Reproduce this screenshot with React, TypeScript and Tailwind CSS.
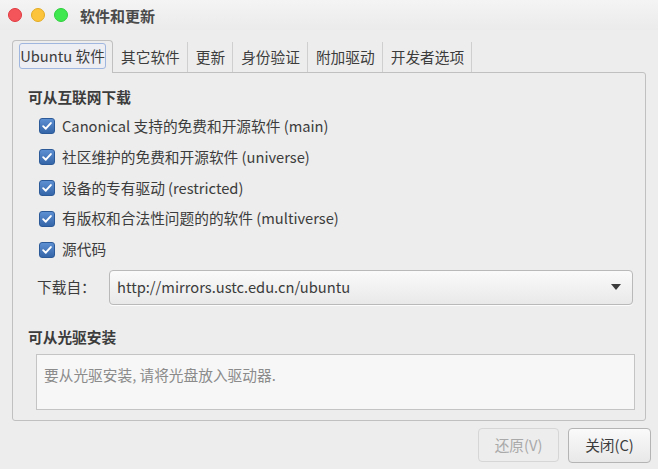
import React from "react";

const SOURCES = [
  "Canonical 支持的免费和开源软件 (main)",
  "社区维护的免费和开源软件 (universe)",
  "设备的专有驱动 (restricted)",
  "有版权和合法性问题的的软件 (multiverse)",
  "源代码",
];

const TABS = ["其它软件", "更新", "身份验证", "附加驱动", "开发者选项"];

function Checkbox() {
  return (
    <span className="flex h-[16px] w-[16px] shrink-0 items-center justify-center rounded-[3px] border border-[#2c5a99] bg-gradient-to-b from-[#5d8fd3] to-[#3466a8]">
      <svg viewBox="0 0 16 16" className="h-[14px] w-[14px]" fill="none">
        <path d="M3.6 8.2 6.6 11.1 12.4 4.6" stroke="#fff" strokeWidth="2.2" strokeLinecap="round" strokeLinejoin="round" />
      </svg>
    </span>
  );
}

export default function App() {
  return (
    <div className="flex h-[469px] w-[658px] flex-col overflow-hidden bg-[#ededed] font-['Noto_Sans_CJK_SC','Noto_Sans',sans-serif] text-[14.7px] text-[#3c3c3c]">
      {/* title bar */}
      <div className="flex h-[30px] shrink-0 items-center bg-gradient-to-b from-[#f4f4f4] to-[#ebebeb] pl-[8px]">
        <div className="flex gap-[9px]">
          <span className="h-[14px] w-[14px] rounded-full border border-[#e0393f] bg-[#f4555b]" />
          <span className="h-[14px] w-[14px] rounded-full border border-[#e3ab22] bg-[#fbc43a]" />
          <span className="h-[14px] w-[14px] rounded-full border border-[#2fcf3e] bg-[#3ee84e]" />
        </div>
        <span className="ml-[12px] text-[15px] font-bold leading-none text-[#4a4a4a]">软件和更新</span>
      </div>

      {/* notebook */}
      <div className="ml-[12px] mr-[12px] mt-[10px] flex flex-col">
        <div className="flex h-[32px] items-end">
          <div className="relative z-10 -mb-px flex h-[33px] w-[101px] items-start rounded-t-[4px] border border-b-0 border-[#c0c0c0] bg-[#ededed] px-[6px] pt-[2px]">
            <span className="flex h-[26px] w-full items-center justify-center rounded-[3px] border border-[#9fb6df] bg-[#eceef3] leading-none">
              Ubuntu 软件
            </span>
          </div>
          {TABS.map((t) => (
            <div key={t} className="flex h-[30px] items-center border-r border-[#cfcfcf] pl-[8px] pr-[7px] leading-none">
              {t}
            </div>
          ))}
        </div>

        <div className="flex h-[349px] flex-col rounded-b-[3px] rounded-tr-[3px] border border-[#c0c0c0] pl-[15px] pr-[10px]">
          <div className="mt-[14px] font-bold leading-[20px]">可从互联网下载</div>
          <div className="mt-[4px] flex flex-col pl-[11px]">
            {SOURCES.map((s) => (
              <div key={s} className="flex h-[30.8px] items-center gap-[7px] leading-none">
                <Checkbox />
                <span>{s}</span>
              </div>
            ))}
          </div>

          <div className="mt-[5px] mr-[2px] flex items-center pl-[9px]">
            <span className="w-[72px] leading-none">下载自：</span>
            <div className="flex h-[35px] flex-1 items-center justify-between rounded-[4px] border border-[#b9b9b9] bg-gradient-to-b from-[#fafafa] to-[#e9e9e9] pl-[7px] pr-[11px] shadow-[0_1px_0_rgba(255,255,255,0.8)]">
              <span className="leading-none">http://mirrors.ustc.edu.cn/ubuntu</span>
              <svg width="10" height="6" viewBox="0 0 10 6">
                <path d="M0 0h10L5 6z" fill="#3c3c3c" />
              </svg>
            </div>
          </div>

          <div className="mt-[22px] font-bold leading-[20px]">可从光驱安装</div>
          <div className="ml-[8px] mt-[7px] h-[56px] border border-[#c4c4c4] bg-[#f7f7f7] pl-[7px] pt-[10px] leading-[20px] text-[#8b8b8b]">
            要从光驱安装, 请将光盘放入驱动器.
          </div>
        </div>
      </div>

      {/* buttons */}
      <div className="mt-[7px] flex justify-end gap-[9px] pr-[7px]">
        <button className="h-[34px] w-[81px] rounded-[4px] border border-[#d6d6d6] bg-[#ededed] leading-none text-[#a9a9a9]">
          还原(V)
        </button>
        <button className="h-[35px] w-[83px] rounded-[4px] border border-[#b4b4b4] bg-gradient-to-b from-[#fafafa] to-[#e8e8e8] leading-none text-[#3c3c3c]">
          关闭(C)
        </button>
      </div>
    </div>
  );
}
